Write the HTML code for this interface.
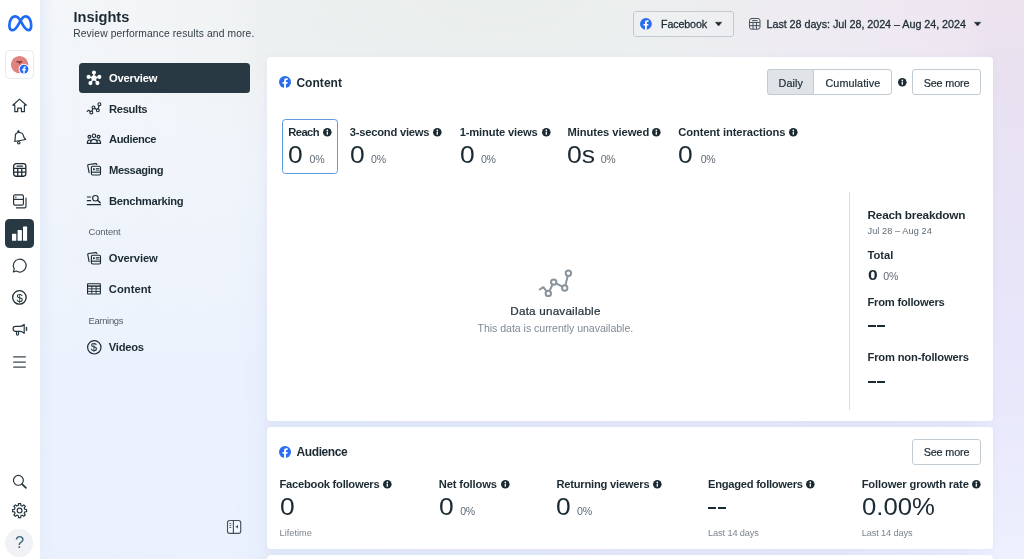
<!DOCTYPE html>
<html lang="en">
<head>
<meta charset="utf-8">
<title>Insights</title>
<style>
*{box-sizing:border-box;margin:0;padding:0}
html,body{width:1024px;height:559px;overflow:hidden}
body{font-family:"Liberation Sans",sans-serif;color:#1c2b33;position:relative;
  background:
    radial-gradient(ellipse 420px 300px at 1040px -20px, rgba(237,225,238,.95), rgba(237,225,238,0) 100%),
    radial-gradient(ellipse 300px 260px at 1060px 620px, rgba(238,243,254,.9), rgba(238,243,254,0) 100%),
    radial-gradient(ellipse 460px 200px at 500px -10px, rgba(233,237,235,1), rgba(233,237,235,.6) 50%, rgba(233,237,235,0) 100%),
    linear-gradient(180deg, rgba(242,245,248,1) 0px, rgba(242,245,248,.8) 80px, rgba(242,245,248,0) 360px),
    linear-gradient(90deg,#e9f0fd 40px,#e9f0fd 255px,#e3eaf8 272px,#e4eaf8 600px,#e5e6f8 900px,#e8e5f8 1024px);
}
#app{position:absolute;left:0;top:0;width:1024px;height:559px;overflow:hidden;filter:blur(0.4px)}
.abs{position:absolute}
.t{position:absolute;white-space:nowrap}
svg{position:absolute;overflow:visible}
#gut{position:absolute;left:960px;top:0;width:64px;height:559px;background:linear-gradient(180deg,#ece3ee 0,#e9e1f0 80px,#e8e2f3 140px,#e8e5f9 290px,#e9e9fc 430px,#edf0fd 559px);-webkit-mask-image:linear-gradient(90deg,transparent,#000 30px);mask-image:linear-gradient(90deg,transparent,#000 30px)}
#navbg{position:absolute;left:40px;top:0;width:227px;height:559px;background:linear-gradient(90deg,rgba(222,232,247,.55) 0,rgba(255,255,255,.18) 14px,rgba(255,255,255,.20) 190px,rgba(255,255,255,0) 222px);-webkit-mask-image:linear-gradient(180deg,#000 0,#000 250px,rgba(0,0,0,.45) 559px);mask-image:linear-gradient(180deg,#000 0,#000 250px,rgba(0,0,0,.45) 559px)}
#rail{position:absolute;left:0;top:0;width:40px;height:559px;background:#fff}
.card{position:absolute;left:267px;width:725.8px;background:#fff;border-radius:4px;box-shadow:0 0 6px rgba(140,160,225,.10)}
.btn{position:absolute;border:1px solid #c3cbd3;border-radius:3px;background:#fff}
</style>
</head>
<body>
<div id="app">
<div id="gut"></div>
<div id="navbg"></div>
<div id="rail"></div>
<svg style="left:0px;top:0px" width="40" height="40" viewBox="0 0 40 40" fill="none" ><path d="M9.35 25.2 C9.35 20.5 11.8 16.3 15.4 16.3 C18.0 16.3 19.6 19.0 21.2 22.0 C23.3 26.0 25.3 30.2 28.4 30.2 C30.6 30.2 31.2 27.8 31.2 25.0 C31.2 20.5 29.0 16.3 25.4 16.3 C23.0 16.3 21.4 19.0 19.8 22.0 C17.6 26.2 15.6 30.2 12.8 30.2 C10.4 30.2 9.35 28.0 9.35 25.2 Z" stroke="#1f6bf3" stroke-width="2.7" stroke-linejoin="round"/></svg>
<div class="abs" style="left:5.2px;top:50px;width:28.6px;height:28.8px;border:1px solid #e7eaee;border-radius:4.5px;background:#fff"></div>
<svg style="left:5px;top:50px" width="30" height="30" viewBox="0 0 30 30" fill="none" ><circle cx="14.6" cy="14.6" r="8.7" fill="#e0827d"/><path d="M11.5 10.9H17.3V12.5H15.7L14.4 15.1L13.8 12.5H11.5Z" fill="#8a3a3d"/><circle cx="19" cy="19.1" r="5.4" fill="#fff"/><g transform="translate(14.6,14.7) scale(0.3667)"><circle cx="12" cy="12" r="12" fill="#1f6bf3"/><path fill="#fff" d="M16.7 15.5l.55-3.5h-3.35V9.75c0-.95.47-1.9 1.97-1.9h1.53V4.9s-1.39-.24-2.71-.24c-2.76 0-4.57 1.67-4.57 4.7V12H7.05v3.5h3.07V24h3.78v-8.5z"/></g></svg>
<svg style="left:0px;top:90px" width="40" height="30" viewBox="0 90 40 30" fill="none" ><path stroke="#25343d" stroke-width="1.18" stroke-linecap="round" stroke-linejoin="round" d="M19.5 99.1 L12.8 105.2 L14.8 105.2 L14.8 111.7 L17.7 111.7 L17.7 108.1 L21.4 108.1 L21.4 111.7 L24.4 111.7 L24.4 105.2 L26.4 105.2 Z"/></svg>
<svg style="left:0px;top:125px" width="40" height="25" viewBox="0 125 40 25" fill="none" ><g stroke="#25343d" stroke-width="1.18" stroke-linecap="round" stroke-linejoin="round"><path d="M14.7 141.5 C15.1 140.0 15.4 138.4 15.3 136.0 C15.2 133.6 17.0 132.4 19.2 132.5 C21.5 132.6 23.0 133.6 23.3 135.3 C23.6 137.0 24.3 138.1 25.7 139.5 Z"/><circle cx="18.75" cy="142.7" r="1.2"/></g><circle cx="18.4" cy="131.5" r="1.15" fill="#1c2b33"/></svg>
<svg style="left:12.9px;top:162.6px" width="13.5" height="13.9" viewBox="0 0 13.5 13.9" fill="none" ><g stroke="#1c2b33" stroke-width="1.3" stroke-linecap="round"><rect x="0.65" y="0.65" width="12.2" height="12.6" rx="2.4"/><path d="M4.07 3.17H9.43"/><path d="M0.65 5.31H12.85 M0.65 9.09H12.85" stroke-linecap="butt"/><path d="M4.74 5.31V13.25 M8.76 5.31V13.25" stroke-linecap="butt"/></g></svg>
<svg style="left:0px;top:190px" width="40" height="25" viewBox="0 190 40 25" fill="none" ><g stroke="#25343d" stroke-width="1.18" stroke-linecap="round" stroke-linejoin="round"><rect x="13.6" y="194.95" width="9.8" height="10.1" rx="1.4"/><path d="M13.6 199.4H23.4" stroke-linecap="butt"/><path d="M26.0 198V206.4 Q26.0 207.8 24.6 207.8 H16.4"/></g><circle cx="15.9" cy="197.2" r="0.7" fill="#1c2b33"/></svg>
<div class="abs" style="left:5.1px;top:218.8px;width:29.2px;height:29.3px;border-radius:4.5px;background:#283943"></div>
<svg style="left:0px;top:215px" width="40" height="35" viewBox="0 215 40 35" fill="none" ><g fill="#fff"><rect x="12.0" y="233.8" width="4.3" height="7" rx="0.6"/><rect x="17.6" y="230.1" width="4.3" height="10.7" rx="0.6"/><rect x="23.0" y="226.6" width="4.1" height="14.2" rx="0.6"/></g></svg>
<svg style="left:0px;top:255px" width="40" height="22" viewBox="0 255 40 22" fill="none" ><path stroke="#25343d" stroke-width="1.18" stroke-linecap="round" stroke-linejoin="round" stroke-width="1.3" d="M16.36 271.03 A6.4 6.4 0 1 0 14.21 268.8 L13.4 271.95 Z"/></svg>
<svg style="left:12.2px;top:290.1px" width="14.8" height="14.8" viewBox="0 0 14.8 14.8" fill="none" ><circle cx="7.4" cy="7.4" r="6.75" stroke="#1c2b33" stroke-width="1.3"/></svg><div class="t" style="left:9.60px;top:290.70px;width:20px;text-align:center;font-size:11.3px;line-height:14px;color:#1c2b33;-webkit-text-stroke:0.1px #1c2b33">$</div>
<svg style="left:0px;top:320px" width="40" height="20" viewBox="0 320 40 20" fill="none" ><g stroke="#25343d" stroke-width="1.18" stroke-linecap="round" stroke-linejoin="round"><path d="M15.6 326.3 H20.3 Q22.7 326.1 24.2 324.5 V333.3 Q22.7 331.6 20.3 331.4 H15.6 A2.55 2.55 0 0 1 15.6 326.3 Z"/><path d="M16.5 331.6 V334.0 Q16.5 335.2 17.5 335.2 Q18.5 335.2 18.5 334.0 V331.8"/><path d="M26.5 327.4V330.2" stroke-width="1.4"/></g></svg>
<svg style="left:0px;top:350px" width="40" height="22" viewBox="0 350 40 22" fill="none" ><path stroke="#3a4852" stroke-width="1.3" d="M13.2 356.9H25.8 M13.2 362.1H25.8 M13.2 367.2H25.8"/></svg>
<svg style="left:0px;top:470px" width="40" height="22" viewBox="0 470 40 22" fill="none" ><g stroke="#25343d" stroke-width="1.18" stroke-linecap="round" stroke-linejoin="round"><circle cx="18.4" cy="480.3" r="4.95"/><path d="M22.1 484.1L25.9 487.9" stroke-width="1.7"/></g></svg>
<svg style="left:0px;top:500px" width="40" height="22" viewBox="0 500 40 22" fill="none" ><g stroke="#25343d" stroke-width="1.18" stroke-linecap="round" stroke-linejoin="round" stroke-width="1.25"><path d="M18.32 505.46 L18.49 503.59 L20.71 503.59 L20.88 505.46 L22.33 506.06 L23.77 504.86 L25.34 506.43 L24.14 507.87 L24.74 509.32 L26.61 509.49 L26.61 511.71 L24.74 511.88 L24.14 513.33 L25.34 514.77 L23.77 516.34 L22.33 515.14 L20.88 515.74 L20.71 517.61 L18.49 517.61 L18.32 515.74 L16.87 515.14 L15.43 516.34 L13.86 514.77 L15.06 513.33 L14.46 511.88 L12.59 511.71 L12.59 509.49 L14.46 509.32 L15.06 507.87 L13.86 506.43 L15.43 504.86 L16.87 506.06Z"/><circle cx="19.6" cy="510.6" r="2.4"/></g></svg>
<div class="abs" style="left:4.8px;top:528.8px;width:28.3px;height:28.3px;border-radius:50%;background:#f0f2f5"></div>
<div class="t" style="left:4.8px;top:532.6px;width:29.4px;text-align:center;font-size:16.5px;line-height:19px;color:#3a6676">?</div>
<div class="t" style="left:73.50px;top:7.66px;font-size:14.6px;line-height:19px;color:#1c2b33;font-weight:bold;letter-spacing:-0.022px;">Insights</div>
<div class="t" style="left:73.20px;top:27.17px;font-size:10.3px;line-height:13px;color:#2f3d45;letter-spacing:0.123px;">Review performance results and more.</div>
<div class="abs" style="left:79px;top:63px;width:171px;height:29.5px;border-radius:3.5px;background:#283943"></div>
<svg style="left:80px;top:64px" width="30" height="28" viewBox="80 64 30 28" fill="none" ><g stroke="#fff" stroke-width="1.3"><path d="M93.95 78.0L93.95 72.6"/><path d="M93.95 78.0L88.55 76.9"/><path d="M93.95 78.0L99.35 76.9"/><path d="M93.95 78.0L90.45 83.1"/><path d="M93.95 78.0L97.45 83.1"/></g><g fill="#fff"><circle cx="93.95" cy="78.0" r="2.7"/><circle cx="93.95" cy="72.6" r="2.05"/><circle cx="88.55" cy="76.9" r="2.05"/><circle cx="99.35" cy="76.9" r="2.05"/><circle cx="90.45" cy="83.1" r="2.05"/><circle cx="97.45" cy="83.1" r="2.05"/></g></svg>
<svg style="left:82px;top:98px" width="24" height="20" viewBox="82 98 24 20" fill="none" ><g stroke="#1c2b33" stroke-width="1.1" stroke-linecap="round" stroke-linejoin="round"><path d="M87.20 111.30L88.70 110.20L90.19 111.46 M91.89 111.08L92.91 108.82M94.72 108.29L96.58 109.51M98.17 108.90L99.03 105.60"/><circle cx="99.40" cy="104.20" r="1.45"/><circle cx="93.50" cy="107.50" r="1.45"/><circle cx="97.80" cy="110.30" r="1.45"/><circle cx="91.30" cy="112.40" r="1.45"/></g></svg>
<svg style="left:80px;top:128px" width="30" height="22" viewBox="80 128 30 22" fill="none" ><g stroke="#1c2b33" stroke-width="1.15" stroke-linecap="round" stroke-linejoin="round"><circle cx="93.95" cy="135.7" r="1.75"/><circle cx="89.4" cy="136.7" r="1.4"/><circle cx="98.5" cy="136.7" r="1.4"/><path d="M90.6 143.3 C90.6 140.6 92.1 139.4 93.95 139.4 C95.8 139.4 97.3 140.6 97.3 143.3 Z"/><path d="M90.6 143.3 H87.3 C87.3 141.2 88.2 140.0 89.5 140.0 C90.2 140.0 90.8 140.3 91.2 140.8"/><path d="M97.3 143.3 H100.6 C100.6 141.2 99.7 140.0 98.4 140.0 C97.7 140.0 97.1 140.3 96.7 140.8"/></g></svg>
<svg style="left:86.95px;top:163.1px" width="14.2" height="12.7" viewBox="0 0 14.2 12.7" fill="none" ><g stroke="#1c2b33" stroke-width="1.15" stroke-linecap="round" stroke-linejoin="round"><path d="M2.1 9.7 L0.75 2.6 Q0.6 1.6 1.6 1.45 L8.6 0.65 Q9.6 0.55 9.9 1.5"/><rect x="4.4" y="3.3" width="9.1" height="8.7" rx="1.2"/><path d="M4.4 9.2H13.5" stroke-linecap="butt"/><path d="M9.2 5.6H12 M9.2 7.1H12" stroke-width="0.9"/><rect x="6.0" y="5.3" width="1.7" height="1.9" fill="#1c2b33" stroke="none"/></g></svg>
<svg style="left:80px;top:190px" width="30" height="20" viewBox="80 190 30 20" fill="none" ><g stroke="#1c2b33" stroke-width="1.15" stroke-linecap="round" stroke-linejoin="round" stroke-linecap="butt"><path d="M87.3 197.0H90.6 M87.3 200.7H90.6 M87.3 204.7H100.4" stroke-width="1.2"/><circle cx="95.4" cy="198.2" r="2.75"/><path d="M97.5 200.3L100.2 202.8" stroke-linecap="round" stroke-width="1.4"/></g></svg>
<svg style="left:86.95px;top:251.8px" width="14.2" height="12.7" viewBox="0 0 14.2 12.7" fill="none" ><g stroke="#1c2b33" stroke-width="1.15" stroke-linecap="round" stroke-linejoin="round"><path d="M2.1 9.7 L0.75 2.6 Q0.6 1.6 1.6 1.45 L8.6 0.65 Q9.6 0.55 9.9 1.5"/><rect x="4.4" y="3.3" width="9.1" height="8.7" rx="1.2"/><path d="M4.4 9.2H13.5" stroke-linecap="butt"/><path d="M9.2 5.6H12 M9.2 7.1H12" stroke-width="0.9"/><rect x="6.0" y="5.3" width="1.7" height="1.9" fill="#1c2b33" stroke="none"/></g></svg>
<svg style="left:80px;top:280px" width="30" height="20" viewBox="80 280 30 20" fill="none" ><g stroke="#1c2b33" stroke-width="1.1"><rect x="87.55" y="283.75" width="12.8" height="10.3" rx="0.6"/><path d="M87.5 286.1H100.4" stroke-width="1.4"/><path d="M87.5 288.8H100.4 M87.5 291.4H100.4 M91.8 286.1V294 M96.1 286.1V294" stroke-width="0.9"/></g></svg>
<svg style="left:86.6px;top:339.7px" width="14.6" height="14.6" viewBox="0 0 14.6 14.6" fill="none" ><circle cx="7.3" cy="7.3" r="6.7" stroke="#1c2b33" stroke-width="1.2"/></svg><div class="t" style="left:83.90px;top:340.20px;width:20px;text-align:center;font-size:11.3px;line-height:14px;color:#1c2b33;-webkit-text-stroke:0.1px #1c2b33">$</div>
<svg style="left:220px;top:515px" width="30" height="25" viewBox="220 515 30 25" fill="none" ><g stroke="#44525b" stroke-width="1.15"><rect x="227.5" y="520.5" width="13.2" height="12.9" rx="2.2" fill="rgba(255,255,255,.35)"/><path d="M233.4 520.5V533.4"/><path d="M229.4 523.4H231.3 M229.4 525.4H231.3 M229.4 527.5H231.3" stroke-width="0.9"/></g><path d="M238.0 525.0V528.6L235.5 526.8Z" fill="#44525b"/></svg>
<div class="t" style="left:109.00px;top:70.67px;font-size:11.2px;line-height:15px;color:#fff;font-weight:bold;letter-spacing:-0.177px;">Overview</div>
<div class="t" style="left:109.00px;top:102.07px;font-size:11.2px;line-height:15px;color:#1c2b33;font-weight:bold;letter-spacing:-0.310px;">Results</div>
<div class="t" style="left:109.00px;top:131.67px;font-size:11.2px;line-height:15px;color:#1c2b33;font-weight:bold;letter-spacing:-0.400px;">Audience</div>
<div class="t" style="left:109.00px;top:163.17px;font-size:11.2px;line-height:15px;color:#1c2b33;font-weight:bold;letter-spacing:-0.397px;">Messaging</div>
<div class="t" style="left:109.00px;top:193.67px;font-size:11.2px;line-height:15px;color:#1c2b33;font-weight:bold;letter-spacing:-0.283px;">Benchmarking</div>
<div class="t" style="left:88.50px;top:225.88px;font-size:9.4px;line-height:12px;color:#525d67;letter-spacing:-0.104px;">Content</div>
<div class="t" style="left:108.80px;top:251.07px;font-size:11.2px;line-height:15px;color:#1c2b33;font-weight:bold;letter-spacing:-0.120px;">Overview</div>
<div class="t" style="left:108.80px;top:281.67px;font-size:11.2px;line-height:15px;color:#1c2b33;font-weight:bold;letter-spacing:0.032px;">Content</div>
<div class="t" style="left:88.50px;top:315.38px;font-size:9.4px;line-height:12px;color:#525d67;letter-spacing:-0.301px;">Earnings</div>
<div class="t" style="left:108.80px;top:339.77px;font-size:11.2px;line-height:15px;color:#1c2b33;font-weight:bold;letter-spacing:-0.242px;">Videos</div>
<div class="btn" style="left:633px;top:11px;width:100.5px;height:26px;background:rgba(255,255,255,.15);border-color:#c0c9d2"></div>
<svg style="left:640.10px;top:18.10px" width="11.80" height="11.80" viewBox="0 0 24 24"><circle cx="12" cy="12" r="12" fill="#2a6df0"/><path fill="#fff" d="M16.7 15.5l.55-3.5h-3.35V9.75c0-.95.47-1.9 1.97-1.9h1.53V4.9s-1.39-.24-2.71-.24c-2.76 0-4.57 1.67-4.57 4.7V12H7.05v3.5h3.07V24h3.78v-8.5z"/></svg>
<div class="t" style="left:661.00px;top:17.07px;font-size:10.7px;line-height:14px;color:#1c2b33;letter-spacing:-0.118px;-webkit-text-stroke:0.28px #1c2b33;">Facebook</div>
<svg style="left:715.30px;top:22.20px" width="7.2" height="4.2" viewBox="0 0 10 6"><path d="M0.3 0.3h9.4L5 5.8z" fill="#1c2b33" stroke="#1c2b33" stroke-width="0.6" stroke-linejoin="round"/></svg>
<svg style="left:748.6px;top:18.0px" width="11.5" height="11.7" viewBox="0 0 11.5 11.7" fill="none" ><g stroke="#44525b" stroke-width="1.0" stroke-linecap="round"><rect x="0.5" y="0.5" width="10.5" height="10.7" rx="2"/><path d="M3.44 2.64H8.06"/><path d="M0.5 4.46H11.0 M0.5 7.67H11.0" stroke-linecap="butt"/><path d="M4.02 4.46V11.2 M7.48 4.46V11.2" stroke-linecap="butt"/></g></svg>
<div class="t" style="left:766.50px;top:17.07px;font-size:10.8px;line-height:14px;color:#1c2b33;letter-spacing:-0.057px;-webkit-text-stroke:0.28px #1c2b33;">Last 28 days: Jul 28, 2024 – Aug 24, 2024</div>
<svg style="left:974.10px;top:22.20px" width="7.2" height="4.2" viewBox="0 0 10 6"><path d="M0.3 0.3h9.4L5 5.8z" fill="#1c2b33" stroke="#1c2b33" stroke-width="0.6" stroke-linejoin="round"/></svg>
<div class="card" style="top:57px;height:364px"></div>
<svg style="left:279.00px;top:76.00px" width="12.00" height="12.00" viewBox="0 0 24 24"><circle cx="12" cy="12" r="12" fill="#2a6df0"/><path fill="#fff" d="M16.7 15.5l.55-3.5h-3.35V9.75c0-.95.47-1.9 1.97-1.9h1.53V4.9s-1.39-.24-2.71-.24c-2.76 0-4.57 1.67-4.57 4.7V12H7.05v3.5h3.07V24h3.78v-8.5z"/></svg>
<div class="t" style="left:296.40px;top:74.77px;font-size:12px;line-height:16px;color:#1c2b33;font-weight:bold;letter-spacing:0.045px;">Content</div>
<div class="btn" style="left:767px;top:69px;width:125px;height:26px;border-color:#c3cbd3"></div>
<div class="abs" style="left:767px;top:69px;width:46.8px;height:26px;border:1px solid #c3cbd3;border-radius:3px 0 0 3px;background:#e0e4e9"></div>
<div class="t" style="left:778.60px;top:75.87px;font-size:10.8px;line-height:14px;color:#1c2b33;letter-spacing:0.074px;-webkit-text-stroke:0.2px #1c2b33;">Daily</div>
<div class="t" style="left:825.40px;top:75.87px;font-size:10.8px;line-height:14px;color:#1c2b33;letter-spacing:0.097px;-webkit-text-stroke:0.2px #1c2b33;">Cumulative</div>
<svg style="left:898.00px;top:78.10px" width="8.60" height="8.60" viewBox="0 0 10 10"><circle cx="5" cy="5" r="5" fill="#1c2b33"/><rect x="4.25" y="4.3" width="1.5" height="3.5" fill="#fff"/><circle cx="5" cy="2.8" r="0.95" fill="#fff"/></svg>
<div class="btn" style="left:912px;top:69px;width:69px;height:26px;border-color:#c3cbd3"></div>
<div class="t" style="left:923.70px;top:75.87px;font-size:10.8px;line-height:14px;color:#1c2b33;letter-spacing:-0.145px;-webkit-text-stroke:0.2px #1c2b33;">See more</div>
<div class="abs" style="left:282px;top:118.5px;width:55.5px;height:55.5px;border:1.4px solid #5f99de;border-radius:3.5px"></div>
<div class="t" style="left:288.20px;top:125.27px;font-size:11.2px;line-height:15px;color:#1c2b33;font-weight:bold;letter-spacing:-0.532px;">Reach</div>
<svg style="left:322.90px;top:127.70px" width="8.60" height="8.60" viewBox="0 0 10 10"><circle cx="5" cy="5" r="5" fill="#1c2b33"/><rect x="4.25" y="4.3" width="1.5" height="3.5" fill="#fff"/><circle cx="5" cy="2.8" r="0.95" fill="#fff"/></svg>
<div class="t" style="left:288.20px;top:139.54px;font-size:23.6px;line-height:31px;color:#1c2b33;transform:scaleX(1.12);transform-origin:0 0;">0</div>
<div class="t" style="left:309.60px;top:151.97px;font-size:10.6px;line-height:14px;color:#606b75;letter-spacing:-0.317px;">0%</div>
<div class="t" style="left:349.80px;top:125.27px;font-size:11.2px;line-height:15px;color:#1c2b33;font-weight:bold;letter-spacing:-0.230px;">3-second views</div>
<svg style="left:433.10px;top:127.70px" width="8.60" height="8.60" viewBox="0 0 10 10"><circle cx="5" cy="5" r="5" fill="#1c2b33"/><rect x="4.25" y="4.3" width="1.5" height="3.5" fill="#fff"/><circle cx="5" cy="2.8" r="0.95" fill="#fff"/></svg>
<div class="t" style="left:349.80px;top:139.54px;font-size:23.6px;line-height:31px;color:#1c2b33;transform:scaleX(1.12);transform-origin:0 0;">0</div>
<div class="t" style="left:371.10px;top:151.97px;font-size:10.6px;line-height:14px;color:#606b75;letter-spacing:-0.317px;">0%</div>
<div class="t" style="left:459.70px;top:125.27px;font-size:11.2px;line-height:15px;color:#1c2b33;font-weight:bold;letter-spacing:-0.162px;">1-minute views</div>
<svg style="left:541.70px;top:127.70px" width="8.60" height="8.60" viewBox="0 0 10 10"><circle cx="5" cy="5" r="5" fill="#1c2b33"/><rect x="4.25" y="4.3" width="1.5" height="3.5" fill="#fff"/><circle cx="5" cy="2.8" r="0.95" fill="#fff"/></svg>
<div class="t" style="left:459.70px;top:139.54px;font-size:23.6px;line-height:31px;color:#1c2b33;transform:scaleX(1.12);transform-origin:0 0;">0</div>
<div class="t" style="left:481.00px;top:151.97px;font-size:10.6px;line-height:14px;color:#606b75;letter-spacing:-0.317px;">0%</div>
<div class="t" style="left:567.40px;top:125.27px;font-size:11.2px;line-height:15px;color:#1c2b33;font-weight:bold;letter-spacing:-0.059px;">Minutes viewed</div>
<svg style="left:651.70px;top:127.70px" width="8.60" height="8.60" viewBox="0 0 10 10"><circle cx="5" cy="5" r="5" fill="#1c2b33"/><rect x="4.25" y="4.3" width="1.5" height="3.5" fill="#fff"/><circle cx="5" cy="2.8" r="0.95" fill="#fff"/></svg>
<div class="t" style="left:567.40px;top:139.54px;font-size:23.6px;line-height:31px;color:#1c2b33;transform:scaleX(1.13);transform-origin:0 0;">0s</div>
<div class="t" style="left:600.70px;top:151.97px;font-size:10.6px;line-height:14px;color:#606b75;letter-spacing:-0.317px;">0%</div>
<div class="t" style="left:678.30px;top:125.27px;font-size:11.2px;line-height:15px;color:#1c2b33;font-weight:bold;letter-spacing:-0.089px;">Content interactions</div>
<svg style="left:788.90px;top:127.70px" width="8.60" height="8.60" viewBox="0 0 10 10"><circle cx="5" cy="5" r="5" fill="#1c2b33"/><rect x="4.25" y="4.3" width="1.5" height="3.5" fill="#fff"/><circle cx="5" cy="2.8" r="0.95" fill="#fff"/></svg>
<div class="t" style="left:678.30px;top:139.54px;font-size:23.6px;line-height:31px;color:#1c2b33;transform:scaleX(1.12);transform-origin:0 0;">0</div>
<div class="t" style="left:700.80px;top:151.97px;font-size:10.6px;line-height:14px;color:#606b75;letter-spacing:-0.317px;">0%</div>
<svg style="left:530px;top:262px" width="50" height="40" viewBox="530 262 50 40" fill="none" ><g stroke="#8a949d" stroke-width="2.0" stroke-linecap="round" stroke-linejoin="round"><path d="M539.70 289.50L543.30 287.20L546.61 291.30 M549.46 290.96L552.54 284.54M556.08 283.38L562.32 286.72M565.35 285.38L567.75 275.82"/><circle cx="568.40" cy="273.20" r="2.7"/><circle cx="553.70" cy="282.10" r="2.7"/><circle cx="564.70" cy="288.00" r="2.7"/><circle cx="548.30" cy="293.40" r="2.7"/></g></svg>
<div class="t" style="left:510.30px;top:303.07px;font-size:11.7px;line-height:15px;color:#25333b;letter-spacing:0.202px;-webkit-text-stroke:0.22px #25333b;">Data unavailable</div>
<div class="t" style="left:477.50px;top:321.37px;font-size:10.6px;line-height:14px;color:#808a94;letter-spacing:-0.045px;">This data is currently unavailable.</div>
<div class="abs" style="left:848.8px;top:191.5px;width:1px;height:218px;background:#d9dce1"></div>
<div class="t" style="left:867.50px;top:208.27px;font-size:11.8px;line-height:15px;color:#1c2b33;font-weight:bold;letter-spacing:-0.220px;">Reach breakdown</div>
<div class="t" style="left:867.50px;top:225.38px;font-size:9.2px;line-height:12px;color:#606b75;letter-spacing:0.069px;">Jul 28 – Aug 24</div>
<div class="t" style="left:867.50px;top:248.47px;font-size:11.2px;line-height:15px;color:#1c2b33;font-weight:bold;letter-spacing:0.018px;">Total</div>
<div class="t" style="left:867.50px;top:264.86px;font-size:15.5px;line-height:20px;color:#1c2b33;font-weight:bold;transform:scaleX(1.12);transform-origin:0 0;">0</div>
<div class="t" style="left:883.20px;top:268.57px;font-size:10.6px;line-height:14px;color:#606b75;letter-spacing:-0.117px;">0%</div>
<div class="t" style="left:867.50px;top:295.37px;font-size:11.2px;line-height:15px;color:#1c2b33;font-weight:bold;letter-spacing:-0.221px;">From followers</div>
<div class="abs" style="left:867.5px;top:325.25px;width:8.15px;height:1.9px;background:#1c2b33"></div><div class="abs" style="left:877.35px;top:325.25px;width:8.15px;height:1.9px;background:#1c2b33"></div>
<div class="t" style="left:867.50px;top:350.47px;font-size:11.2px;line-height:15px;color:#1c2b33;font-weight:bold;letter-spacing:-0.178px;">From non-followers</div>
<div class="abs" style="left:867.5px;top:380.65000000000003px;width:8.15px;height:1.9px;background:#1c2b33"></div><div class="abs" style="left:877.35px;top:380.65000000000003px;width:8.15px;height:1.9px;background:#1c2b33"></div>
<div class="card" style="top:427.3px;height:122px"></div>
<svg style="left:279.00px;top:445.80px" width="12.00" height="12.00" viewBox="0 0 24 24"><circle cx="12" cy="12" r="12" fill="#2a6df0"/><path fill="#fff" d="M16.7 15.5l.55-3.5h-3.35V9.75c0-.95.47-1.9 1.97-1.9h1.53V4.9s-1.39-.24-2.71-.24c-2.76 0-4.57 1.67-4.57 4.7V12H7.05v3.5h3.07V24h3.78v-8.5z"/></svg>
<div class="t" style="left:296.60px;top:444.47px;font-size:12px;line-height:16px;color:#1c2b33;font-weight:bold;letter-spacing:-0.429px;">Audience</div>
<div class="btn" style="left:912px;top:439px;width:69px;height:25.7px;border-color:#c3cbd3"></div>
<div class="t" style="left:923.70px;top:445.17px;font-size:10.8px;line-height:14px;color:#1c2b33;letter-spacing:-0.145px;-webkit-text-stroke:0.2px #1c2b33;">See more</div>
<div class="t" style="left:279.50px;top:477.17px;font-size:11.2px;line-height:15px;color:#1c2b33;font-weight:bold;letter-spacing:-0.250px;">Facebook followers</div>
<svg style="left:383.00px;top:479.70px" width="8.60" height="8.60" viewBox="0 0 10 10"><circle cx="5" cy="5" r="5" fill="#1c2b33"/><rect x="4.25" y="4.3" width="1.5" height="3.5" fill="#fff"/><circle cx="5" cy="2.8" r="0.95" fill="#fff"/></svg>
<div class="t" style="left:279.50px;top:491.54px;font-size:23.6px;line-height:31px;color:#1c2b33;transform:scaleX(1.12);transform-origin:0 0;">0</div>
<div class="t" style="left:279.50px;top:526.98px;font-size:9.2px;line-height:12px;color:#7b858f;letter-spacing:0.025px;">Lifetime</div>
<div class="t" style="left:438.80px;top:477.17px;font-size:11.2px;line-height:15px;color:#1c2b33;font-weight:bold;letter-spacing:-0.152px;">Net follows</div>
<svg style="left:500.90px;top:479.70px" width="8.60" height="8.60" viewBox="0 0 10 10"><circle cx="5" cy="5" r="5" fill="#1c2b33"/><rect x="4.25" y="4.3" width="1.5" height="3.5" fill="#fff"/><circle cx="5" cy="2.8" r="0.95" fill="#fff"/></svg>
<div class="t" style="left:438.80px;top:491.54px;font-size:23.6px;line-height:31px;color:#1c2b33;transform:scaleX(1.12);transform-origin:0 0;">0</div>
<div class="t" style="left:460.30px;top:503.97px;font-size:10.6px;line-height:14px;color:#606b75;letter-spacing:-0.317px;">0%</div>
<div class="t" style="left:556.40px;top:477.17px;font-size:11.2px;line-height:15px;color:#1c2b33;font-weight:bold;letter-spacing:-0.231px;">Returning viewers</div>
<svg style="left:652.50px;top:479.70px" width="8.60" height="8.60" viewBox="0 0 10 10"><circle cx="5" cy="5" r="5" fill="#1c2b33"/><rect x="4.25" y="4.3" width="1.5" height="3.5" fill="#fff"/><circle cx="5" cy="2.8" r="0.95" fill="#fff"/></svg>
<div class="t" style="left:556.40px;top:491.54px;font-size:23.6px;line-height:31px;color:#1c2b33;transform:scaleX(1.12);transform-origin:0 0;">0</div>
<div class="t" style="left:577.10px;top:503.97px;font-size:10.6px;line-height:14px;color:#606b75;letter-spacing:-0.317px;">0%</div>
<div class="t" style="left:708.10px;top:477.17px;font-size:11.2px;line-height:15px;color:#1c2b33;font-weight:bold;letter-spacing:-0.285px;">Engaged followers</div>
<svg style="left:806.20px;top:479.70px" width="8.60" height="8.60" viewBox="0 0 10 10"><circle cx="5" cy="5" r="5" fill="#1c2b33"/><rect x="4.25" y="4.3" width="1.5" height="3.5" fill="#fff"/><circle cx="5" cy="2.8" r="0.95" fill="#fff"/></svg>
<div class="abs" style="left:708.1px;top:506.65000000000003px;width:8.30px;height:1.9px;background:#1c2b33"></div><div class="abs" style="left:718.10px;top:506.65000000000003px;width:8.30px;height:1.9px;background:#1c2b33"></div>
<div class="t" style="left:708.10px;top:526.98px;font-size:9.2px;line-height:12px;color:#7b858f;letter-spacing:-0.115px;">Last 14 days</div>
<div class="t" style="left:861.70px;top:477.17px;font-size:11.2px;line-height:15px;color:#1c2b33;font-weight:bold;letter-spacing:-0.150px;">Follower growth rate</div>
<svg style="left:972.40px;top:479.70px" width="8.60" height="8.60" viewBox="0 0 10 10"><circle cx="5" cy="5" r="5" fill="#1c2b33"/><rect x="4.25" y="4.3" width="1.5" height="3.5" fill="#fff"/><circle cx="5" cy="2.8" r="0.95" fill="#fff"/></svg>
<div class="t" style="left:861.70px;top:491.54px;font-size:23.6px;line-height:31px;color:#1c2b33;transform:scaleX(1.09);transform-origin:0 0;">0.00%</div>
<div class="t" style="left:861.70px;top:526.98px;font-size:9.2px;line-height:12px;color:#7b858f;letter-spacing:-0.115px;">Last 14 days</div>
<div class="card" style="top:555.4px;height:40px"></div>
</div>
</body>
</html>
